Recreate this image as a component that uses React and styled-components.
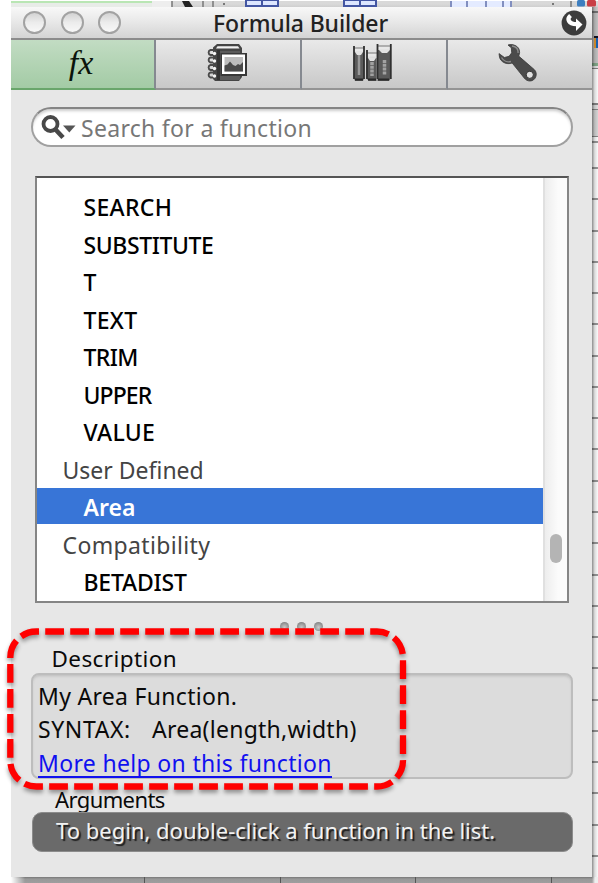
import React from "react";
import styled, { createGlobalStyle, css } from "styled-components";

const GlobalStyle = createGlobalStyle`
  *, *::before, *::after { box-sizing: border-box; }
  body { margin: 0; background: #fff; overflow: hidden; }
  button { font: inherit; border: 0; padding: 0; background: none; }
`;

const Desktop = styled.main`
  position: relative;
  width: 598px;
  height: 883px;
  padding-left: 11px;
  display: grid;
  grid-template: 7px 870px 6px / 581px 6px;
  overflow: hidden;
  font: 23px/30px "Noto Sans", "Open Sans", sans-serif;
  color: #0a0a0a;
  white-space: nowrap;
`;

/* Spreadsheet visible around the floating palette */
const SheetTop = styled.div`
  grid-column: 1 / -1;
  display: flex;
  background: linear-gradient(#fff 0 1px, #d9d9d9 1px 4px, #cfcfcf);
  svg { display: block; }
`;

const SheetRight = styled.div`
  padding: 29px 0 0 2px;
  background:
    linear-gradient(90deg, rgba(0, 0, 0, 0.45), rgba(0, 0, 0, 0.14) 45%, rgba(0, 0, 0, 0.02)),
    linear-gradient(
      #cfcfcf 0 4px, #777 4px 6px, #c6c6c6 6px 56px, #86ad8d 56px 59px, #e8e8e8 59px 61px,
      #858585 61px 62px, #fff 62px 96px, #888 96px 98px, #e4e4e4 98px 102px, #888 102px 103px,
      #d9d9d9 103px 129px, #888 129px 130px, transparent 130px
    ),
    repeating-linear-gradient(#fff 0 4px, #9a9a9a 4px 6px, #fff 6px 31.27px) 0 156px;
`;

const CellSliver = styled.div`
  width: 4px;
  height: 12px;
  background: linear-gradient(90deg, #c8862c 40%, #1660b0 60%);
  border-top: 2px solid #112;
`;

const SheetBottom = styled.div`
  grid-column: 1 / -1;
  background:
    linear-gradient(90deg, #fff 0, transparent 14px),
    linear-gradient(90deg, transparent 581px, #eee 584px),
    linear-gradient(#777, #999 2px, #9e9e9e),
    #999;
  display: grid;
  grid-template-columns: 134px 136px 135px 136px;
`;

const ColumnLine = styled.i`
  border-right: 1px solid #555;
`;

const Palette = styled.section`
  display: flex;
  flex-direction: column;
  background: #e7e7e7;
`;

const TitleBar = styled.header`
  flex: none;
  height: 33px;
  display: grid;
  grid-template-columns: 202px 1fr 31px;
  align-items: center;
  background: linear-gradient(#f8f8f8, #e9e9e9 45%, #d4d4d4);
  border-bottom: 2px solid #8c8c8c;
`;

const WindowButtons = styled.div`
  display: flex;
  gap: 14.5px;
  padding-left: 12px;
`;

const WindowButton = styled.button`
  width: 23px;
  height: 23px;
  border-radius: 50%;
  border: 2px solid #a2a2a2;
  background: linear-gradient(#d3d3d3, #ececec 50%, #f8f8f8);
`;

const Text = styled.span`
  letter-spacing: ${(p) => p.$track || 0}px;
  ${(p) => p.$weight && css`font-weight: ${p.$weight};`}
`;

const Title = styled(Text)`
  color: #222;
  margin-top: 1px;
`;

const Tabs = styled.nav`
  flex: none;
  height: 50px;
  display: grid;
  grid-template-columns: 145px 146px 145.5px 1fr;
`;

const Tab = styled.button`
  display: grid;
  place-items: center;
  padding: 0 3px 3px 0;
  border-right: 2px solid #858990;
  border-bottom: 2px solid #949494;
  background: linear-gradient(#e9e9e9, #c8c8c8);
  ${(p) => p.$active && css`
    background: linear-gradient(#c2dcc3, #a3cba5);
    border-bottom-color: #69a66b;
  `}
  &:last-child { border-right: 0; }
  svg { display: block; }
`;

const Fx = styled.span`
  font: italic 34px/34px "Liberation Serif", "Times New Roman", serif;
  color: #0b140b;
  margin-top: 1px;
`;

const SearchField = styled.label`
  flex: none;
  width: 542px;
  height: 40px;
  margin: 17px 0 0 20px;
  padding-left: 8px;
  display: flex;
  align-items: center;
  border: 2px solid #a0a0a0;
  border-top-color: #858585;
  border-radius: 20px;
  background: #fff;
  box-shadow: inset 0 3px 3px -1px #ccc;
  color: #777;
`;

const Placeholder = styled(Text)`
  margin: 1px 0 0 4px;
`;

const FunctionBox = styled.div`
  flex: none;
  width: 534px;
  height: 427px;
  margin: 29px 0 0 24px;
  display: grid;
  grid-template-columns: 1fr 24px;
  border: 2px solid #858585;
  border-top-color: #555;
  background: #fff;
  overflow: hidden;
`;

const FunctionList = styled.ul`
  margin: 0;
  padding: 10px 0 0;
  list-style: none;
  overflow: hidden;
`;

const Row = styled.li`
  height: 37.5px;
  padding-left: ${(p) => (p.$heading ? 25.5 : 46.5)}px;
  line-height: 39px;
  color: ${(p) => (p.$heading ? "#444" : p.$selected ? "#fff" : "#000")};
  ${(p) => p.$selected && css`
    background: linear-gradient(#3875d7, #3875d7) 0 0 / 100% 36px no-repeat;
  `}
`;

const ScrollTrack = styled.div`
  border-left: 2px solid #e0e0e0;
  background: linear-gradient(90deg, #ededed, #fbfbfb 60%);
  padding: 356px 0 0 5px;
`;

const ScrollThumb = styled.div`
  width: 12px;
  height: 29px;
  border-radius: 6px;
  background: #b4b4b4;
`;

const Splitter = styled.div`
  flex: none;
  height: 15px;
  margin-top: 19px;
  padding-left: 0;
  display: flex;
  justify-content: center;
  gap: 8px;
`;

const Dot = styled.i`
  width: 9px;
  height: 9px;
  border-radius: 50%;
  background: radial-gradient(circle at 50% 60%, #ccc, #858585 75%);
`;

const SectionLabel = styled.h2`
  flex: none;
  margin: ${(p) => p.$top}px 0 0 ${(p) => p.$indent}px;
  height: 30px;
  font-size: ${(p) => p.$size}px;
  line-height: 32px;
  font-weight: 400;
`;

const DescriptionPanel = styled.div`
  flex: none;
  width: 542px;
  height: 106px;
  margin: 0 0 0 20px;
  padding: 5px 0 0 5px;
  border: 2px solid #bdbdbd;
  border-radius: 8px;
  background: #dcdcdc;
  box-shadow: inset 0 2px 3px -1px #bbb;
  line-height: 33.4px;
`;

const Syntax = styled.div`
  display: grid;
  grid-template-columns: 114px auto;
`;

const HelpLink = styled.a`
  display: inline-block;
  height: 31.5px;
  border-bottom: 2px solid #11e;
  color: #1010f0;
`;

const Hint = styled.div`
  flex: none;
  width: 541px;
  height: 40px;
  margin: -1px 0 0 21px;
  padding-left: 23px;
  border: 1px solid #8c8c8c;
  border-radius: 10px;
  background: #6a6a6a;
  color: #f2f2f2;
  font-size: 22px;
  line-height: 34px;
  text-shadow: 2px 2px 1px #1d1d1d;
`;

const Annotation = styled.svg`
  position: absolute;
  left: 0;
  top: 620px;
  overflow: visible;
  filter: drop-shadow(0 3px 2px rgba(0, 0, 0, 0.38));
  pointer-events: none;
`;

const rows = [
  { label: "SEARCH", track: 0.3, weight: 500 },
  { label: "SUBSTITUTE", track: -0.4, weight: 500 },
  { label: "T", weight: 500 },
  { label: "TEXT", track: 0.3, weight: 500 },
  { label: "TRIM", track: -0.6, weight: 500 },
  { label: "UPPER", track: -0.9, weight: 500 },
  { label: "VALUE", track: 0.3, weight: 500 },
  { label: "User Defined", track: 0, heading: true },
  { label: "Area", track: 0, weight: 600, selected: true },
  { label: "Compatibility", track: 0.35, heading: true },
  { label: "BETADIST", track: -0.2, weight: 500 },
];

const SheetToolbar = () => (
  <svg width="587" height="7" viewBox="11 0 587 7">
    <path d="M11 1h141v2H11z" fill="#b9e6b4" />
    <path d="M11 3h141v4H11z" fill="#e8ece8" />
    <path d="M152 1h20v6h-20z" fill="#eee" />
    <path d="M172 1v6M203 1v6M213 1v6M571 1v6" stroke="#777" strokeWidth="1.5" />
    <path d="M182 1h7l4 6h-8z" fill="#222" />
    <path d="M223 3h2v2h-2zM552 3h2v2h-2z" fill="#777" />
    <path d="M246 0h32v6h-32zM344 0h32v6h-32z" fill="#dce6ff" stroke="#4356a3" strokeWidth="2" />
    <path d="M262 0v6M360 0v6" stroke="#4356a3" strokeWidth="2" />
    <path d="M450 1h62v6h-62z" fill="#e4ebff" />
    <path d="M451 1v6M467 1v6M486 1v6M503 1v6M511 1v6" stroke="#6272aa" strokeWidth="1.5" />
    <rect x="577" y="0" width="8" height="6.5" rx="1.5" fill="#3d7fc0" />
    <rect x="587" y="0" width="9" height="6.5" rx="1.5" fill="#c93f46" />
  </svg>
);

const ToggleIcon = () => (
  <svg width="26" height="26" viewBox="0 0 26 26">
    <circle cx="13" cy="13" r="12.4" fill="#3c3c3c" />
    <path d="M9.5 5.500C5.500 9 7.500 14 15.500 14.200" fill="none" stroke="#fff" strokeWidth="4.200" />
    <path d="M15 8.500l6.500 6-6.500 6.500z" fill="#fff" />
  </svg>
);

const NotebookIcon = () => (
  <svg width="42" height="40" viewBox="0 0 42 40">
    <path d="M7 4.500l4-3.500h22l3 4v29l-3 4H9l-2-2z" fill="#454545" />
    <path d="M11.500 3.200h20.500l1.500 2.300H10z" fill="#f2f2f2" />
    <path d="M12 8h22v29H12z" fill="#5a5a5a" />
    <path d="M12.500 7v30" stroke="#333" strokeWidth="3" />
    {[8, 15.5, 23, 30.5].map((y) => (
      <g key={y}>
        <path d={`M10 ${y + 4}H4.500a2.600 2.600 0 0 1 0-5H8`} fill="none" stroke="#4a4a4a" strokeWidth="1.900" />
        <circle cx="8.500" cy={y + 2.5} r="1.700" fill="#f4f4f4" />
      </g>
    ))}
    <path d="M14.500 10h26.500v23H14.500z" fill="#383838" />
    <path d="M16 11.500h23v19.500H16z" fill="#fff" />
    <path d="M18.500 14h18.500v14.500H18.500z" fill="#bdbdbd" />
    <path d="M18.500 28.500v-6l3-1 2.500-3 3 3.500 2.500 1 2.500-2 2 1 3-3v9.500z" fill="#4a4a4a" />
  </svg>
);

const BooksIcon = () => (
  <svg width="39" height="39" viewBox="0 0 39 39">
    <path d="M1 9h10v26l-1 3H2l-1-3zM13.500 15h10v23h-8l-2-3zM24.500 7h13.500v28l-2 3H24.500z" fill="#5a5a5a" />
    <path d="M2 5h8v3H2zM14.500 10h8v3.500h-8zM25.500 2.500h11v3.500h-11z" fill="#e8e8e8" />
    <path d="M2 9h8l-2 3H4zM15 15h8l-2 3h-4zM26 7h11l-3 3h-5z" fill="#e2e2e2" />
    <path d="M1 5h10M14 10h10M24 3h14" stroke="#777" strokeWidth="1" />
    <path d="M1 3v33M11 3v33M14 7v29M24.500 1v35M37.800 1v35" stroke="#303030" strokeWidth="1.800" fill="none" />
    <path d="M6 12v20" stroke="#999" strokeWidth="2.500" />
    <path d="M19 19v14M31.500 17v15" stroke="#a2a2a2" strokeWidth="3.500" strokeDasharray="3 .8" />
    <path d="M2 36.500h8M15 36.500h8M25 36.500h11" stroke="#282828" strokeWidth="2" />
  </svg>
);

const WrenchIcon = () => (
  <svg width="40" height="40" viewBox="0 0 40 40">
    <path
      d="M10 2C15 .5 21.800 3 21.600 9.500c-.1 1.400-.5 2.500-.9 3.600L36.200 26.500c4.300 4 1.300 11.500-4.200 11.500-2.400 0-4.200-1-5.800-3L14.200 20C8.500 22 2.500 19 1.500 14l-.5-3.400 5.400 3.900 4.700-1.200 2.600-3.500-.4-5z"
      fill="#4b4b4b"
      stroke="#3a3a3a"
      strokeWidth=".8"
    />
    <path d="M14 3c4 .5 6.500 3 6 7M3.500 14.500c2 3.500 6 5 9.500 4" fill="none" stroke="#8b8b8b" strokeWidth="1.400" />
    <circle cx="31.800" cy="31.800" r="3.600" fill="#e1e1e1" stroke="#333" strokeWidth="1" />
  </svg>
);

const SearchIcon = () => (
  <svg width="36" height="26" viewBox="0 0 36 26">
    <circle cx="9.500" cy="10" r="7" fill="none" stroke="#484848" strokeWidth="3.800" />
    <path d="M14.500 15.500l7.500 8" stroke="#484848" strokeWidth="4.600" />
    <path d="M22 11.500H34.500l-6.200 7z" fill="#555" />
  </svg>
);

export default function App() {
  return (
    <>
      <GlobalStyle />
      <Desktop>
        <SheetTop>
          <SheetToolbar />
        </SheetTop>

        <Palette>
          <TitleBar>
            <WindowButtons>
              <WindowButton aria-label="Close" />
              <WindowButton aria-label="Minimize" />
              <WindowButton aria-label="Zoom" />
            </WindowButtons>
            <Title $track={-0.1} $weight={500}>Formula Builder</Title>
            <ToggleIcon />
          </TitleBar>

          <Tabs>
            <Tab $active><Fx>fx</Fx></Tab>
            <Tab aria-label="Scrapbook"><NotebookIcon /></Tab>
            <Tab aria-label="Reference tools"><BooksIcon /></Tab>
            <Tab aria-label="Compatibility report"><WrenchIcon /></Tab>
          </Tabs>

          <SearchField>
            <SearchIcon />
            <Placeholder $track={0.3}>Search for a function</Placeholder>
          </SearchField>

          <FunctionBox>
            <FunctionList>
              {rows.map((r) => (
                <Row key={r.label} $heading={r.heading} $selected={r.selected}>
                  <Text $track={r.track} $weight={r.weight}>{r.label}</Text>
                </Row>
              ))}
            </FunctionList>
            <ScrollTrack><ScrollThumb /></ScrollTrack>
          </FunctionBox>

          <Splitter><Dot /><Dot /><Dot /></Splitter>

          <SectionLabel $top={6} $indent={40.5} $size={22.5}><Text $track={0.4}>Description</Text></SectionLabel>
          <DescriptionPanel>
            <div><Text $track={0.3}>My Area Function.</Text></div>
            <Syntax>
              <Text $track={0.6}>SYNTAX:</Text>
              <Text $track={0.25}>Area(length,width)</Text>
            </Syntax>
            <HelpLink><Text $track={0.33}>More help on this function</Text></HelpLink>
          </DescriptionPanel>

          <SectionLabel $top={4} $indent={44} $size={22}><Text $track={-0.6}>Arguments</Text></SectionLabel>
          <Hint><Text>To begin, double-click a function in the list.</Text></Hint>
        </Palette>

        <SheetRight><CellSliver /></SheetRight>
        <SheetBottom>
          <ColumnLine /><ColumnLine /><ColumnLine /><ColumnLine />
        </SheetBottom>

        <Annotation width="420" height="180" viewBox="0 0 420 180">
          <path
            d="M10.300 38A26 26 0 0 1 36.300 11.500H377A26 26 0 0 1 403 38V140A26 26 0 0 1 377 166.500H36.300A26 26 0 0 1 10.300 140Z"
            fill="none"
            stroke="#f00"
            strokeWidth="6.300"
            strokeDasharray="18.750 6.250"
          />
        </Annotation>
      </Desktop>
    </>
  );
}
